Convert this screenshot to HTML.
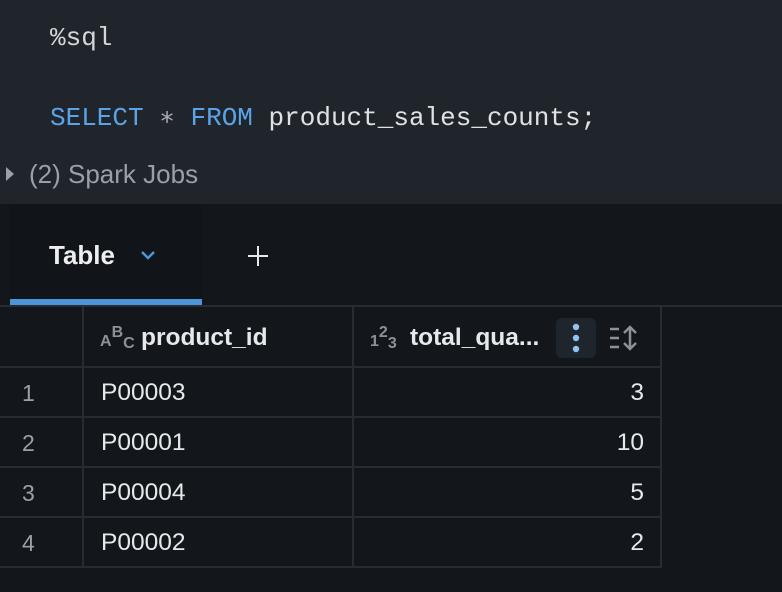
<!DOCTYPE html>
<html><head><style>
*{margin:0;padding:0;box-sizing:border-box}
body{width:782px;height:592px;background:#13171b;font-family:"Liberation Sans",sans-serif;overflow:hidden;position:relative;color:#e6e8eb}
.code{position:absolute;left:0;top:0;width:782px;height:204px;background:#20252c}
.mono{font-family:"Liberation Mono",monospace;font-size:26px;position:absolute;left:50px}
.kw{color:#5aa3e8}
.spark{position:absolute;left:29px;top:159px;font-size:26px;color:#9aa0a6}
.tri{position:absolute;left:6px;top:167px;width:0;height:0;border-left:8px solid #9aa0a6;border-top:7px solid transparent;border-bottom:7px solid transparent}
.tabbg{position:absolute;left:10px;top:204px;width:192px;height:96px;background:#111418}
.tab{position:absolute;left:49px;top:240px;font-size:26px;font-weight:bold;color:#eceef0}
.ul{position:absolute;left:10px;top:299px;width:192px;height:6px;background:#4d95db}
.hl{position:absolute;height:2px;background:#272c33;left:0}
.vl{position:absolute;width:2px;background:#272c33;top:306px;height:262px}
.t{position:absolute;font-size:24.5px;color:#e6e8eb}
.idx{position:absolute;font-size:23px;color:#9aa0a6;left:22px}
.ic{position:absolute;color:#8a939c;font-weight:bold;font-size:16px}
</style></head><body>
<div class="code">
<div class="mono" style="top:23px;color:#d4d7da">%sql</div>
<div class="mono" style="top:102px"><span class="kw">SELECT</span> <span style="color:#aab">∗</span> <span class="kw">FROM</span> <span style="color:#dfe2e5">product_sales_counts;</span></div>
<div class="tri"></div><div class="spark">(2) Spark Jobs</div>
</div>
<div class="tabbg"></div>
<div class="tab">Table</div>
<svg style="position:absolute;left:139px;top:248px" width="18" height="14"><path d="M3 4l6 6 6-6" stroke="#4d95db" stroke-width="2.5" fill="none"/></svg>
<svg style="position:absolute;left:246px;top:244px" width="24" height="24"><path d="M12 2v20M2 12h20" stroke="#e6e8eb" stroke-width="2"/></svg>
<div class="ul"></div>
<div class="hl" style="top:305px;width:782px"></div>
<div class="hl" style="top:366px;width:662px"></div>
<div class="hl" style="top:416px;width:662px"></div>
<div class="hl" style="top:466px;width:662px"></div>
<div class="hl" style="top:516px;width:662px"></div>
<div class="hl" style="top:566px;width:662px"></div>
<div class="vl" style="left:82px"></div>
<div class="vl" style="left:352px"></div>
<div class="vl" style="left:660px"></div>
<div class="ic" style="left:100px;top:325px"><span style="position:relative;top:8px">A</span><span style="position:relative;top:-1px">B</span><span style="position:relative;top:10px">C</span></div>
<div class="t" style="left:141px;top:324px;font-weight:bold">product_id</div>
<div class="ic" style="left:370px;top:325px"><span style="position:relative;top:8px">1</span><span style="position:relative;top:-1px">2</span><span style="position:relative;top:10px">3</span></div>
<div class="t" style="left:410px;top:324px;font-weight:bold">total_qua...</div>
<div style="position:absolute;left:556px;top:318px;width:40px;height:40px;border-radius:6px;background:#1f252d"></div>
<svg style="position:absolute;left:556px;top:318px" width="40" height="40"><circle cx="20" cy="9" r="3.2" fill="#8cc4f5"/><circle cx="20" cy="20" r="3.2" fill="#8cc4f5"/><circle cx="20" cy="31" r="3.2" fill="#8cc4f5"/></svg>
<svg style="position:absolute;left:608px;top:324px" width="34" height="30"><path d="M2 5h9M2 14h9M2 23h9" stroke="#8a939c" stroke-width="2.5"/><path d="M22 3v22M16 9l6-6 6 6M16 19l6 6 6-6" stroke="#8a939c" stroke-width="2.5" fill="none"/></svg>
<div class="idx" style="top:380px">1</div><div class="t" style="left:101px;top:379px">P00003</div><div class="t" style="right:138px;top:379px">3</div>
<div class="idx" style="top:430px">2</div><div class="t" style="left:101px;top:429px">P00001</div><div class="t" style="right:138px;top:429px">10</div>
<div class="idx" style="top:480px">3</div><div class="t" style="left:101px;top:479px">P00004</div><div class="t" style="right:138px;top:479px">5</div>
<div class="idx" style="top:530px">4</div><div class="t" style="left:101px;top:529px">P00002</div><div class="t" style="right:138px;top:529px">2</div>
</body></html>
